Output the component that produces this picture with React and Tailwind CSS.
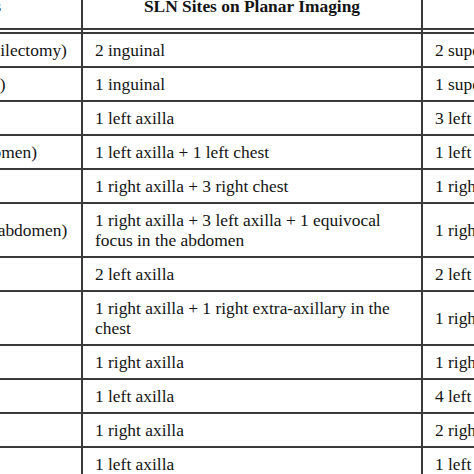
import React from "react";

const rows = [
  { site: "Penis (post penilectomy)", planar: ["2 inguinal"], spect: "2 superficial inguinal" },
  { site: "Perineum (anal)", planar: ["1 inguinal"], spect: "1 superficial inguinal" },
  { site: "Left arm", planar: ["1 left axilla"], spect: "3 left axilla" },
  { site: "Back (left abdomen)", planar: ["1 left axilla + 1 left chest"], spect: "1 left axilla + 1 left chest" },
  { site: "Right chest", planar: ["1 right axilla + 3 right chest"], spect: "1 right axilla + 3 right chest" },
  {
    site: "Trunk (central abdomen)",
    planar: ["1 right axilla + 3 left axilla + 1 equivocal", "focus in the abdomen"],
    spect: "1 right axilla + 3 left axilla",
  },
  { site: "Left back", planar: ["2 left axilla"], spect: "2 left axilla" },
  {
    site: "Right back",
    planar: ["1 right axilla + 1 right extra-axillary in the", "chest"],
    spect: "1 right axilla + 1 right chest",
  },
  { site: "Right arm", planar: ["1 right axilla"], spect: "1 right axilla" },
  { site: "Left chest", planar: ["1 left axilla"], spect: "4 left axilla" },
  { site: "Right arm", planar: ["1 right axilla"], spect: "2 right axilla" },
  { site: "Left arm", planar: ["1 left axilla"], spect: "1 left axilla" },
];

const Row = ({ row }) => (
  <div className="flex border-b-2 border-[#3a3a3a]">
    <div className="w-[200px] shrink-0 px-[13px] py-[6px] flex items-center whitespace-nowrap">
      {row.site}
    </div>
    <div className="w-[340px] shrink-0 border-l-2 border-[#3a3a3a] pl-[12px] pr-[10px] py-[6px]">
      {row.planar.map((line, i) => (
        <div key={i} className="whitespace-nowrap">
          {line}
        </div>
      ))}
    </div>
    <div className="w-[260px] shrink-0 border-l-2 border-[#3a3a3a] px-[12px] py-[6px] flex items-center whitespace-nowrap">
      {row.spect}
    </div>
  </div>
);

export default function App() {
  return (
    <div className="w-[474px] h-[474px] overflow-hidden bg-white">
      <div
        className="-ml-[119px] -mt-[10px] w-[800px] text-[17.4px] leading-[20px] text-[#141414]"
        style={{ fontFamily: '"Liberation Serif", "Times New Roman", serif' }}
      >
        {/* Header */}
        <div className="flex border-b-2 border-[#3a3a3a] font-bold">
          <div className="w-[200px] shrink-0 pl-[18px] pt-[6px] pb-[12px] whitespace-nowrap">
            Primary Sites
          </div>
          <div className="w-[340px] shrink-0 border-l-2 border-[#3a3a3a] pt-[6px] pb-[12px] text-center whitespace-nowrap">
            SLN Sites on Planar Imaging
          </div>
          <div className="w-[260px] shrink-0 border-l-2 border-[#3a3a3a] pt-[6px] pb-[12px]" />
        </div>

        {/* double rule gap */}
        <div className="flex h-[2px] border-b-2 border-[#3a3a3a] box-content">
          <div className="w-[200px] shrink-0" />
          <div className="w-[340px] shrink-0 border-l-2 border-[#3a3a3a]" />
          <div className="w-[260px] shrink-0 border-l-2 border-[#3a3a3a]" />
        </div>

        {rows.map((row, i) => (
          <Row key={i} row={row} />
        ))}
      </div>
    </div>
  );
}
